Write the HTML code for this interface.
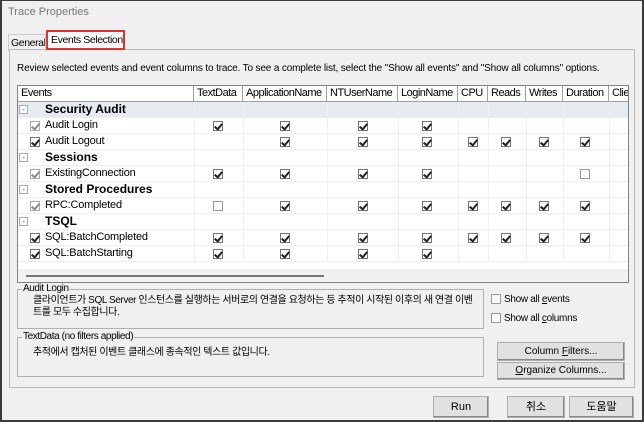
<!DOCTYPE html>
<html><head><meta charset="utf-8"><style>
*{box-sizing:border-box;margin:0;padding:0}
body{width:644px;height:422px;background:#f0f0f0;font-family:"Liberation Sans","Noto Sans CJK KR",sans-serif;font-size:11px;color:#000;position:relative;overflow:hidden}
.abs{position:absolute}
.win{left:0;top:0;width:644px;height:422px;border:2px solid #3c3c3c;border-top:1px solid #3c3c3c}
.title{left:8px;top:6px;color:#777;font-size:11px}
.panel{left:9px;top:49px;width:626px;height:339px;border:1px solid #b8b8b8;background:#f0f0f0}
.tab{top:33px;height:17px;font-size:10.5px;padding:2px 2px;white-space:nowrap;letter-spacing:-0.4px;overflow:hidden}
.grid{left:17px;top:85px;width:612px;height:198px;border:1px solid #828282;background:#f0f0f0;overflow:hidden}
.hdr{position:absolute;top:0;height:16px;border-right:1px solid #a0a0a0;border-bottom:1px solid #a0a0a0;background:#fff;padding:1px 3px;font-size:11px;letter-spacing:-0.5px;white-space:nowrap;overflow:hidden}
.row{position:absolute;left:0;width:610px;height:16px;background:#fff;border-bottom:1px solid #eee}
.row.g1{background:#e6ebf0}
.cb{position:absolute;width:10px;height:10px;border:1px solid #777;background:#fff}
.cb::after{content:"";position:absolute;left:2px;top:0px;width:3px;height:6px;border-right:2px solid #222;border-bottom:2px solid #222;transform:rotate(40deg)}
.cb.gr{border-color:#aaa}.cb.gr::after{border-color:#888}
.cb.e::after{display:none}
.lbl{position:absolute;left:27px;top:1px;font-size:11px;letter-spacing:-0.2px}
.grp{position:absolute;left:27px;top:0px;font-weight:bold;font-size:12px}
.minus{position:absolute;left:1px;top:3px;width:9px;height:9px;border:1px solid #aaa;background:#fafafa;font-size:8px;line-height:7px;text-align:center;color:#555}
.gb{border:1px solid #b0b0b0}
.gbl{position:absolute;top:-7px;left:4px;background:#f0f0f0;font-size:10px;padding:0 1px;letter-spacing:-0.4px}
.btn{position:absolute;border:1px solid #adadad;background:#e1e1e1;text-align:center;font-size:11px;box-shadow:inset -1px -1px 0 #888}
.vl{position:absolute;top:16px;width:1px;height:160px;background:#f0f0f0}
</style></head><body>
<div class="abs win"></div>
<div class="abs title">Trace Properties</div>
<div class="abs panel"></div>
<div class="abs tab" style="left:8px;width:38px;border:1px solid #ccc;border-bottom:none;top:34px">General</div>
<div class="abs tab" style="left:46px;top:30px;height:20px;width:79px;background:#fff;border:2px solid #e53030;padding:2px 3px">Events Selection</div>
<div class="abs" style="left:17px;top:63px;font-size:10px;letter-spacing:-0.15px;white-space:nowrap">Review selected events and event columns to trace. To see a complete list, select the "Show all events" and "Show all columns" options.</div>
<div class="abs grid">
<div class="hdr" style="left:0;width:176px">Events</div>
<div class="hdr" style="left:176px;width:49px">TextData</div>
<div class="hdr" style="left:225px;width:84px">ApplicationName</div>
<div class="hdr" style="left:309px;width:71px">NTUserName</div>
<div class="hdr" style="left:380px;width:60px">LoginName</div>
<div class="hdr" style="left:440px;width:30px">CPU</div>
<div class="hdr" style="left:470px;width:38px">Reads</div>
<div class="hdr" style="left:508px;width:37px">Writes</div>
<div class="hdr" style="left:545px;width:46px">Duration</div>
<div class="hdr" style="left:591px;width:30px">Clie</div>
<div class="row g1" style="top:16px"><div class="minus">-</div><div class="grp">Security Audit</div></div>
<div class="row" style="top:32px"><div class="cb gr" style="left:12px;top:3px"></div><div class="lbl">Audit Login</div>
<div class="cb" style="left:195px;top:3px"></div><div class="cb" style="left:262px;top:3px"></div><div class="cb" style="left:340px;top:3px"></div><div class="cb" style="left:404px;top:3px"></div></div>
<div class="row" style="top:48px"><div class="cb" style="left:12px;top:3px"></div><div class="lbl">Audit Logout</div>
<div class="cb" style="left:262px;top:3px"></div><div class="cb" style="left:340px;top:3px"></div><div class="cb" style="left:404px;top:3px"></div><div class="cb" style="left:450px;top:3px"></div><div class="cb" style="left:483px;top:3px"></div><div class="cb" style="left:521px;top:3px"></div><div class="cb" style="left:562px;top:3px"></div></div>
<div class="row" style="top:64px"><div class="minus">-</div><div class="grp">Sessions</div></div>
<div class="row" style="top:80px"><div class="cb gr" style="left:12px;top:3px"></div><div class="lbl">ExistingConnection</div>
<div class="cb" style="left:195px;top:3px"></div><div class="cb" style="left:262px;top:3px"></div><div class="cb" style="left:340px;top:3px"></div><div class="cb" style="left:404px;top:3px"></div><div class="cb e" style="left:562px;top:3px;border-color:#999"></div></div>
<div class="row" style="top:96px"><div class="minus">-</div><div class="grp">Stored Procedures</div></div>
<div class="row" style="top:112px"><div class="cb gr" style="left:12px;top:3px"></div><div class="lbl">RPC:Completed</div>
<div class="cb e" style="left:195px;top:3px;border-color:#999"></div><div class="cb" style="left:262px;top:3px"></div><div class="cb" style="left:340px;top:3px"></div><div class="cb" style="left:404px;top:3px"></div><div class="cb" style="left:450px;top:3px"></div><div class="cb" style="left:483px;top:3px"></div><div class="cb" style="left:521px;top:3px"></div><div class="cb" style="left:562px;top:3px"></div></div>
<div class="row" style="top:128px"><div class="minus">-</div><div class="grp">TSQL</div></div>
<div class="row" style="top:144px"><div class="cb" style="left:12px;top:3px"></div><div class="lbl">SQL:BatchCompleted</div>
<div class="cb" style="left:195px;top:3px"></div><div class="cb" style="left:262px;top:3px"></div><div class="cb" style="left:340px;top:3px"></div><div class="cb" style="left:404px;top:3px"></div><div class="cb" style="left:450px;top:3px"></div><div class="cb" style="left:483px;top:3px"></div><div class="cb" style="left:521px;top:3px"></div><div class="cb" style="left:562px;top:3px"></div></div>
<div class="row" style="top:160px"><div class="cb" style="left:12px;top:3px"></div><div class="lbl">SQL:BatchStarting</div>
<div class="cb" style="left:195px;top:3px"></div><div class="cb" style="left:262px;top:3px"></div><div class="cb" style="left:340px;top:3px"></div><div class="cb" style="left:404px;top:3px"></div></div>
<div class="vl" style="left:176px"></div><div class="vl" style="left:225px"></div><div class="vl" style="left:309px"></div><div class="vl" style="left:380px"></div><div class="vl" style="left:440px"></div><div class="vl" style="left:470px"></div><div class="vl" style="left:508px"></div><div class="vl" style="left:545px"></div><div class="vl" style="left:591px"></div>
<div class="abs" style="left:0;top:176px;width:610px;height:7px;background:#fff"></div>
<div class="abs" style="left:8px;top:189px;width:298px;height:2px;background:#777"></div>
</div>
<div class="abs gb" style="left:17px;top:289px;width:467px;height:40px"><div class="gbl">Audit Login</div>
<div class="abs" style="left:15px;top:5px;font-size:10px;line-height:12px;width:445px;letter-spacing:-0.4px">클라이언트가 SQL Server 인스턴스를 실행하는 서버로의 연결을 요청하는 등 추적이 시작된 이후의 새 연결 이벤트를 모두 수집합니다.</div></div>
<div class="abs gb" style="left:17px;top:337px;width:467px;height:40px"><div class="gbl">TextData (no filters applied)</div>
<div class="abs" style="left:15px;top:5px;font-size:10px;letter-spacing:-0.4px">추적에서 캡처된 이벤트 클래스에 종속적인 텍스트 값입니다.</div></div>
<div class="cb e abs" style="left:491px;top:294px;border-color:#999"></div><div class="abs" style="left:504px;top:294px;font-size:10px;letter-spacing:-0.3px">Show all <u>e</u>vents</div>
<div class="cb e abs" style="left:491px;top:313px;border-color:#999"></div><div class="abs" style="left:504px;top:313px;font-size:10px;letter-spacing:-0.3px">Show all <u>c</u>olumns</div>
<div class="btn" style="left:497px;top:342px;width:128px;height:19px;line-height:17px;font-size:10px">Column <u>F</u>ilters...</div>
<div class="btn" style="left:497px;top:362px;width:128px;height:18px;line-height:16px;font-size:10px"><u>O</u>rganize Columns...</div>
<div class="btn" style="left:433px;top:396px;width:56px;height:22px;line-height:20px">Run</div>
<div class="btn" style="left:507px;top:396px;width:58px;height:22px;line-height:20px">취소</div>
<div class="btn" style="left:569px;top:396px;width:65px;height:22px;line-height:20px">도움말</div>
</body></html>
